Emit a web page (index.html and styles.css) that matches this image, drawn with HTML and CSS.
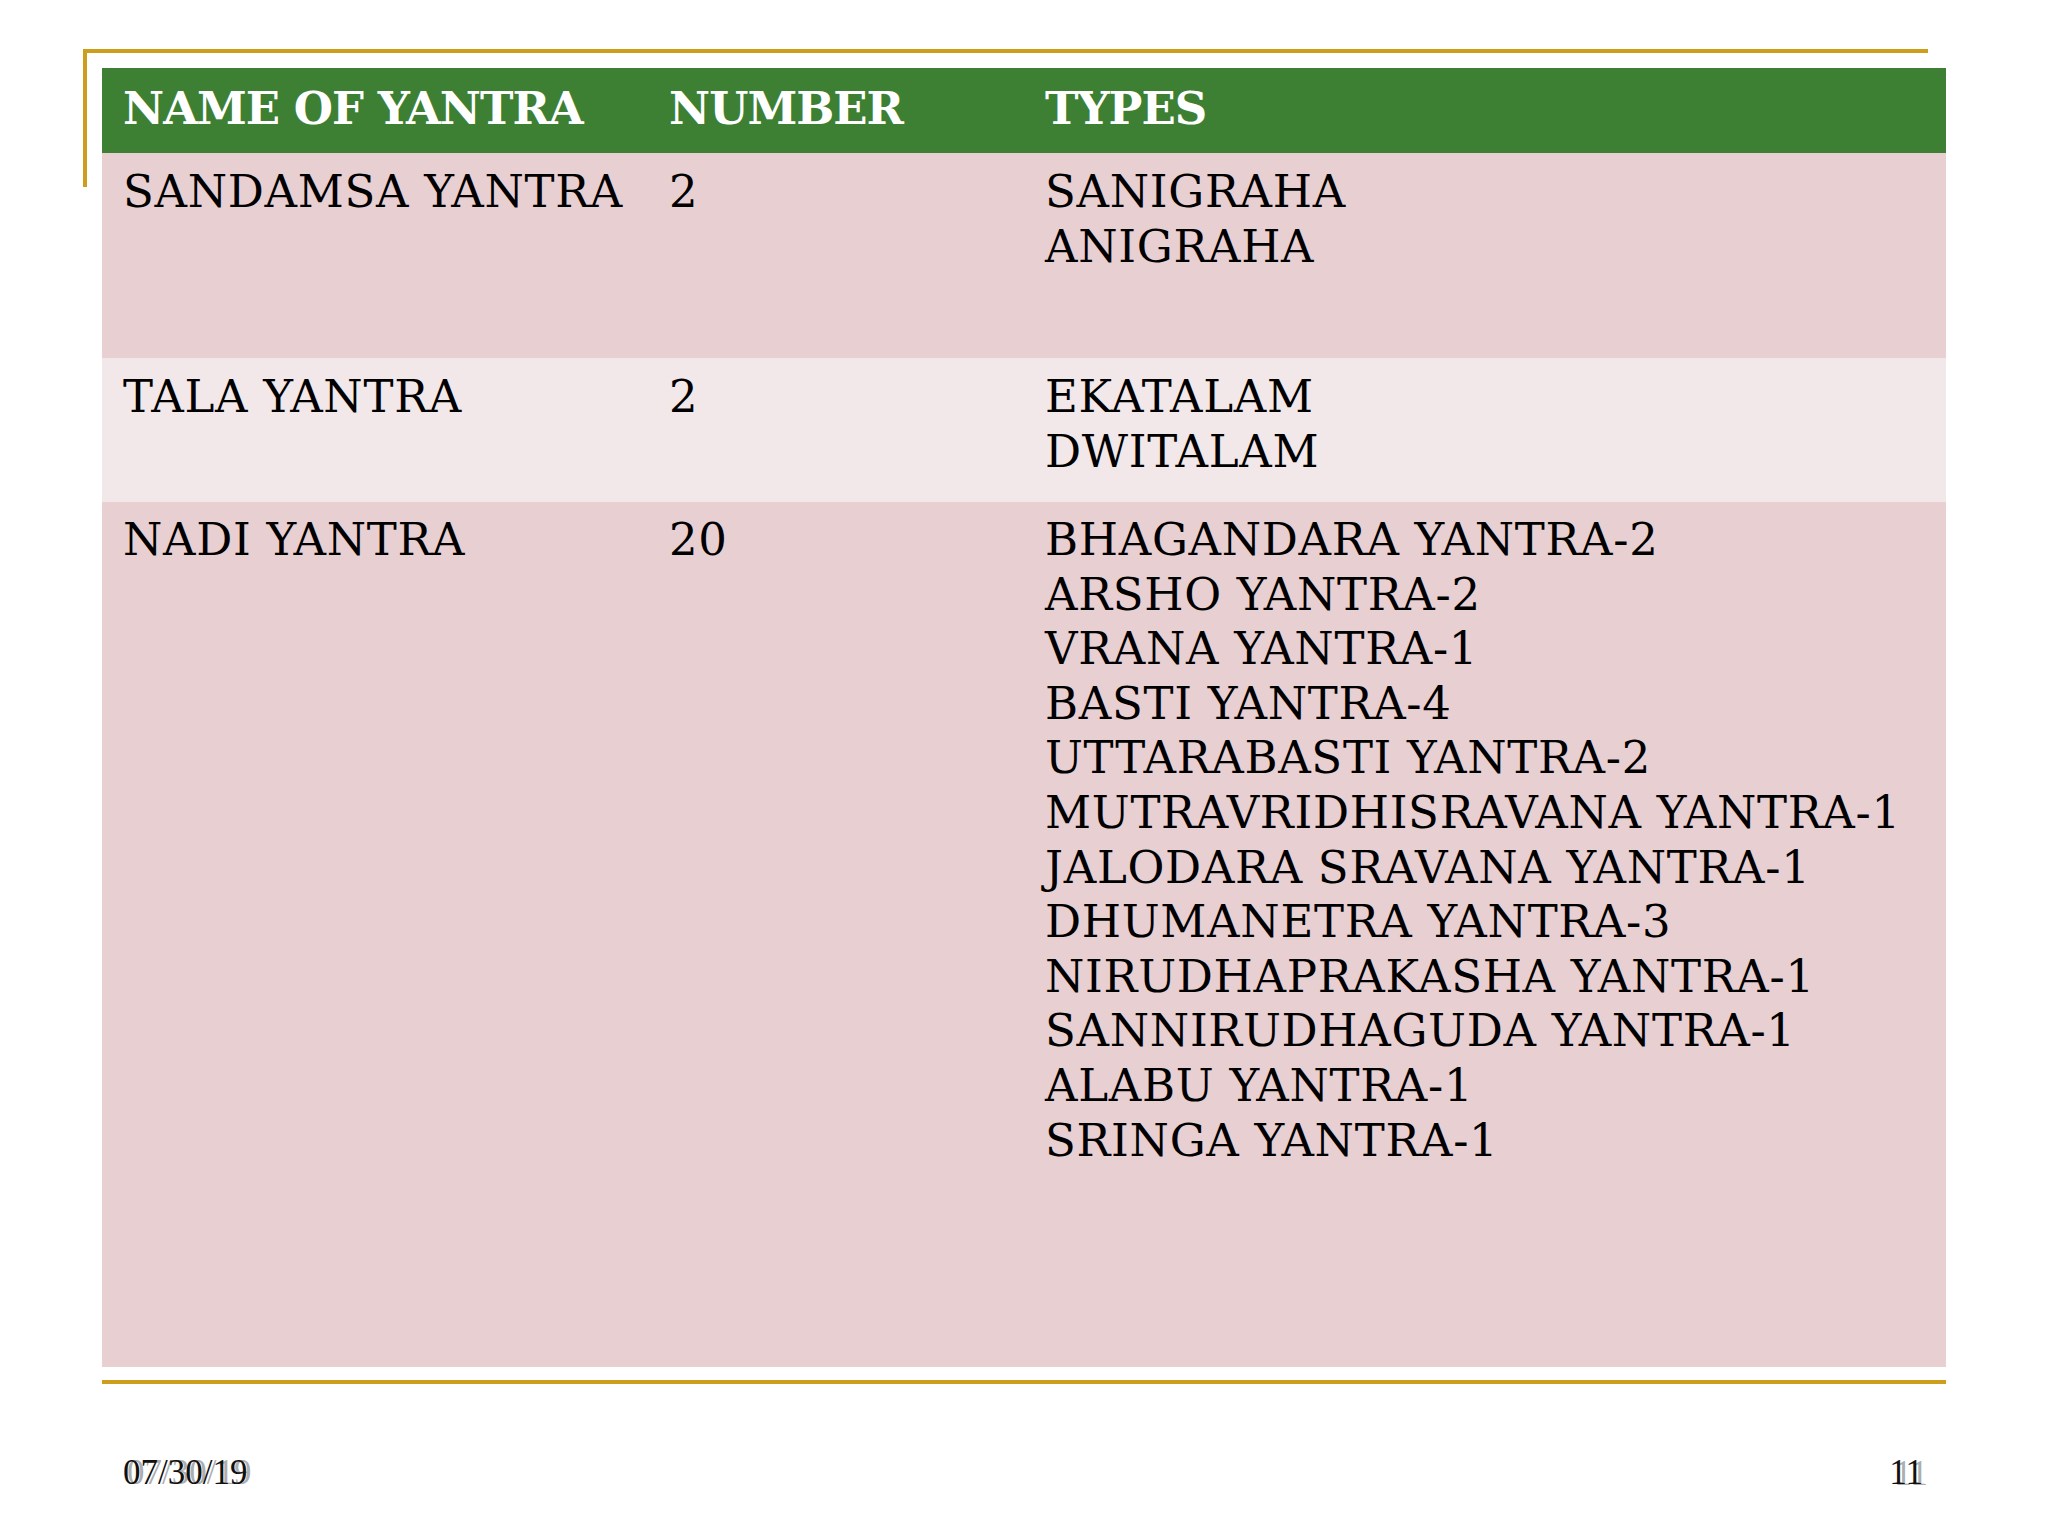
FILE: index.html
```html
<!DOCTYPE html>
<html>
<head>
<meta charset="utf-8">
<link rel="stylesheet" href="styles.css">
</head>
<body>
<div class="slide">
  <div class="top-area">
    <div class="frame"></div>
    <div class="table">
      <div class="row head">
        <div class="cell c1">NAME OF YANTRA</div>
        <div class="cell c2">NUMBER</div>
        <div class="cell c3">TYPES</div>
      </div>
      <div class="row r1">
        <div class="cell c1">SANDAMSA YANTRA</div>
        <div class="cell c2">2</div>
        <div class="cell c3">SANIGRAHA<br>ANIGRAHA</div>
      </div>
      <div class="row r2">
        <div class="cell c1">TALA YANTRA</div>
        <div class="cell c2">2</div>
        <div class="cell c3">EKATALAM<br>DWITALAM</div>
      </div>
      <div class="row r3">
        <div class="cell c1">NADI YANTRA</div>
        <div class="cell c2">20</div>
        <div class="cell c3">BHAGANDARA YANTRA-2<br>ARSHO YANTRA-2<br>VRANA YANTRA-1<br>BASTI YANTRA-4<br>UTTARABASTI YANTRA-2<br>MUTRAVRIDHISRAVANA YANTRA-1<br>JALODARA SRAVANA YANTRA-1<br>DHUMANETRA YANTRA-3<br>NIRUDHAPRAKASHA YANTRA-1<br>SANNIRUDHAGUDA YANTRA-1<br>ALABU YANTRA-1<br>SRINGA YANTRA-1</div>
      </div>
    </div>
  </div>
  <div class="bottom-rule"></div>
  <div class="footer">
    <div class="date">07/30/19</div>
    <div class="page">11</div>
  </div>
</div>
</body>
</html>
```

FILE: styles.css
```css
html, body {
  margin: 0;
  padding: 0;
  background: #ffffff;
}
.slide {
  width: 2048px;
  height: 1536px;
  background: #ffffff;
  overflow: hidden;
  font-family: "DejaVu Serif", "Liberation Serif", serif;
}
.top-area {
  display: grid;
}
.frame {
  grid-area: 1 / 1;
  margin-left: 83px;
  margin-top: 49px;
  width: 1841px;
  height: 134px;
  border-top: 4px solid #cc9e1c;
  border-left: 4px solid #cc9e1c;
}
.table {
  grid-area: 1 / 1;
  margin-left: 102px;
  margin-top: 68px;
  width: 1844px;
  display: flex;
  flex-direction: column;
}
.row {
  display: grid;
  grid-template-columns: 544px 376px 924px;
  box-sizing: border-box;
}
.cell {
  padding-left: 23px;
  font-size: 45px;
  line-height: 54.6px;
  letter-spacing: 0.7px;
  color: #000000;
  white-space: nowrap;
}
.cell.c1 {
  padding-left: 21px;
}
.head {
  background: #3d8034;
  height: 85px;
  padding-top: 14px;
}
.head .cell {
  color: #ffffff;
  font-weight: bold;
  letter-spacing: -1px;
}
.r1 {
  background: #e8cfd2;
  height: 205px;
  padding-top: 12px;
}
.r2 {
  background: #f2e7e9;
  height: 144px;
  padding-top: 12px;
}
.r3 {
  background: #e8cfd2;
  height: 865px;
  padding-top: 11px;
}
.bottom-rule {
  margin-left: 102px;
  margin-top: 13px;
  width: 1844px;
  height: 4px;
  background: #cc9e1c;
}
.footer {
  display: flex;
  justify-content: space-between;
  margin-left: 123px;
  width: 1800px;
  margin-top: 71px;
  font-family: "Liberation Serif", serif;
  font-size: 35px;
  line-height: 35px;
  color: #111111;
}
.date {
  text-shadow: 4px 0 rgba(120, 120, 120, 0.6);
}
.page {
  text-shadow: 5px 1px rgba(120, 120, 120, 0.6);
}
```
